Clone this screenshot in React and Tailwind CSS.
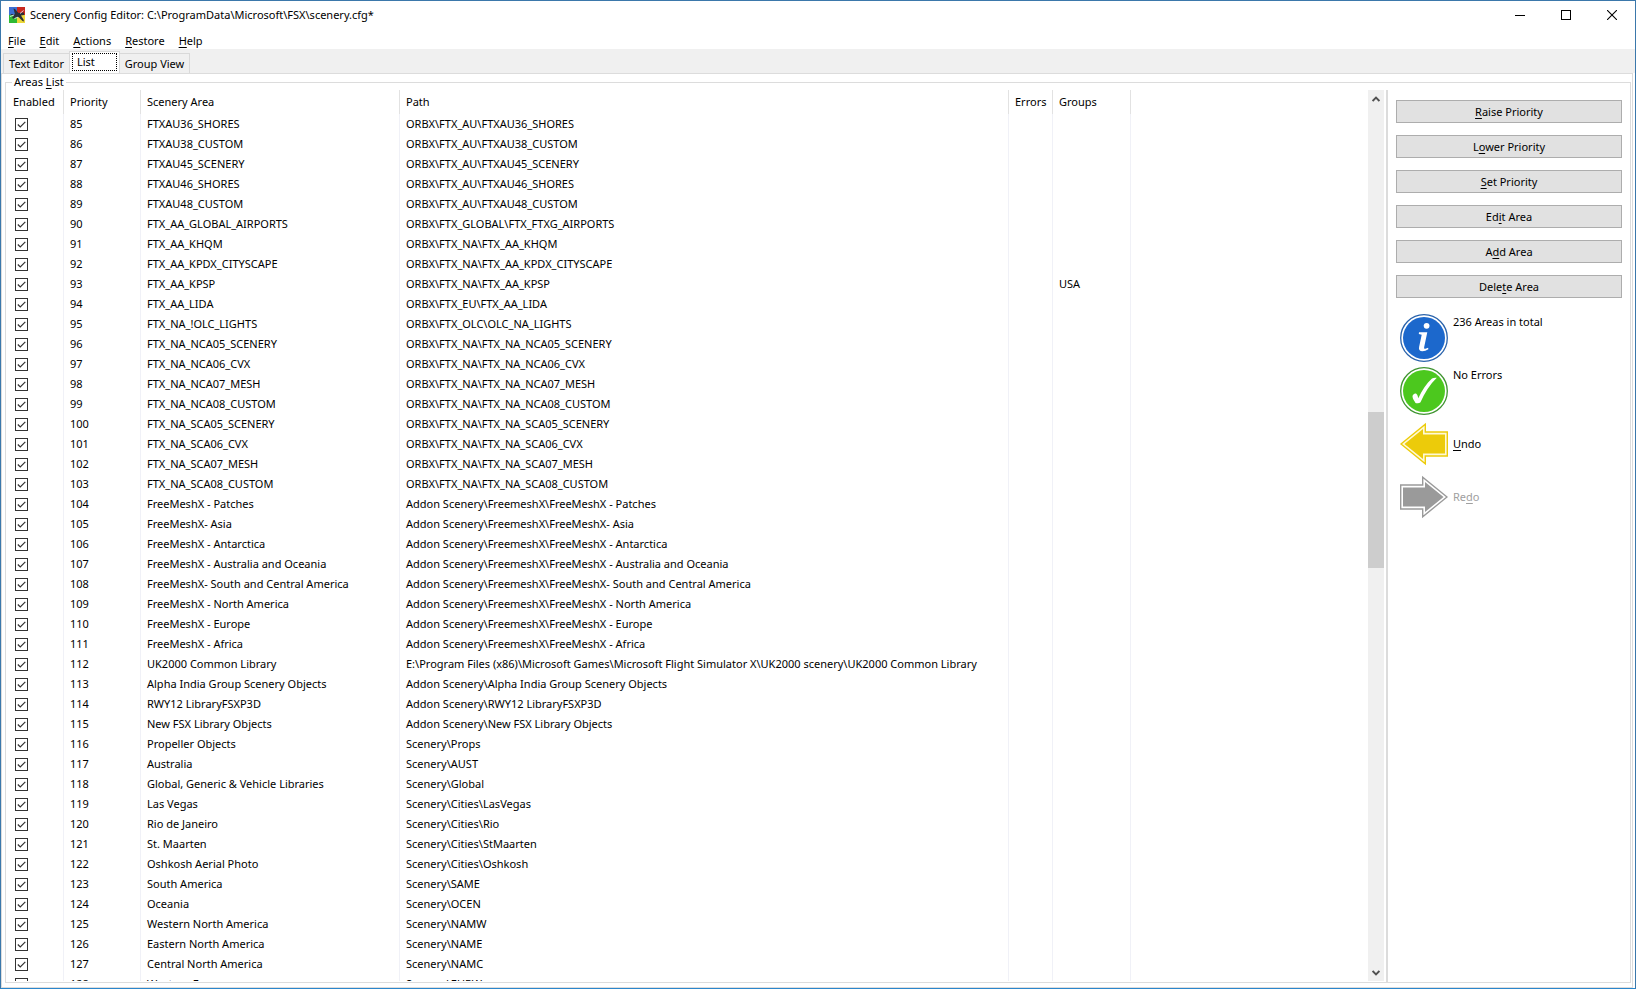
import React from "react";

const SCENERY = [
  ["FTXAU36_SHORES", "ORBX\\FTX_AU\\FTXAU36_SHORES"],
  ["FTXAU38_CUSTOM", "ORBX\\FTX_AU\\FTXAU38_CUSTOM"],
  ["FTXAU45_SCENERY", "ORBX\\FTX_AU\\FTXAU45_SCENERY"],
  ["FTXAU46_SHORES", "ORBX\\FTX_AU\\FTXAU46_SHORES"],
  ["FTXAU48_CUSTOM", "ORBX\\FTX_AU\\FTXAU48_CUSTOM"],
  ["FTX_AA_GLOBAL_AIRPORTS", "ORBX\\FTX_GLOBAL\\FTX_FTXG_AIRPORTS"],
  ["FTX_AA_KHQM", "ORBX\\FTX_NA\\FTX_AA_KHQM"],
  ["FTX_AA_KPDX_CITYSCAPE", "ORBX\\FTX_NA\\FTX_AA_KPDX_CITYSCAPE"],
  ["FTX_AA_KPSP", "ORBX\\FTX_NA\\FTX_AA_KPSP", "USA"],
  ["FTX_AA_LIDA", "ORBX\\FTX_EU\\FTX_AA_LIDA"],
  ["FTX_NA_!OLC_LIGHTS", "ORBX\\FTX_OLC\\OLC_NA_LIGHTS"],
  ["FTX_NA_NCA05_SCENERY", "ORBX\\FTX_NA\\FTX_NA_NCA05_SCENERY"],
  ["FTX_NA_NCA06_CVX", "ORBX\\FTX_NA\\FTX_NA_NCA06_CVX"],
  ["FTX_NA_NCA07_MESH", "ORBX\\FTX_NA\\FTX_NA_NCA07_MESH"],
  ["FTX_NA_NCA08_CUSTOM", "ORBX\\FTX_NA\\FTX_NA_NCA08_CUSTOM"],
  ["FTX_NA_SCA05_SCENERY", "ORBX\\FTX_NA\\FTX_NA_SCA05_SCENERY"],
  ["FTX_NA_SCA06_CVX", "ORBX\\FTX_NA\\FTX_NA_SCA06_CVX"],
  ["FTX_NA_SCA07_MESH", "ORBX\\FTX_NA\\FTX_NA_SCA07_MESH"],
  ["FTX_NA_SCA08_CUSTOM", "ORBX\\FTX_NA\\FTX_NA_SCA08_CUSTOM"],
  ["FreeMeshX - Patches", "Addon Scenery\\FreemeshX\\FreeMeshX - Patches"],
  ["FreeMeshX- Asia", "Addon Scenery\\FreemeshX\\FreeMeshX- Asia"],
  ["FreeMeshX - Antarctica", "Addon Scenery\\FreemeshX\\FreeMeshX - Antarctica"],
  ["FreeMeshX - Australia and Oceania", "Addon Scenery\\FreemeshX\\FreeMeshX - Australia and Oceania"],
  ["FreeMeshX- South and Central America", "Addon Scenery\\FreemeshX\\FreeMeshX- South and Central America"],
  ["FreeMeshX - North America", "Addon Scenery\\FreemeshX\\FreeMeshX - North America"],
  ["FreeMeshX - Europe", "Addon Scenery\\FreemeshX\\FreeMeshX - Europe"],
  ["FreeMeshX - Africa", "Addon Scenery\\FreemeshX\\FreeMeshX - Africa"],
  ["UK2000 Common Library", "E:\\Program Files (x86)\\Microsoft Games\\Microsoft Flight Simulator X\\UK2000 scenery\\UK2000 Common Library"],
  ["Alpha India Group Scenery Objects", "Addon Scenery\\Alpha India Group Scenery Objects"],
  ["RWY12 LibraryFSXP3D", "Addon Scenery\\RWY12 LibraryFSXP3D"],
  ["New FSX Library Objects", "Addon Scenery\\New FSX Library Objects"],
  ["Propeller Objects", "Scenery\\Props"],
  ["Australia", "Scenery\\AUST"],
  ["Global, Generic & Vehicle Libraries", "Scenery\\Global"],
  ["Las Vegas", "Scenery\\Cities\\LasVegas"],
  ["Rio de Janeiro", "Scenery\\Cities\\Rio"],
  ["St. Maarten", "Scenery\\Cities\\StMaarten"],
  ["Oshkosh Aerial Photo", "Scenery\\Cities\\Oshkosh"],
  ["South America", "Scenery\\SAME"],
  ["Oceania", "Scenery\\OCEN"],
  ["Western North America", "Scenery\\NAMW"],
  ["Eastern North America", "Scenery\\NAME"],
  ["Central North America", "Scenery\\NAMC"],
  ["Western Europe", "Scenery\\EURW"],
];
const AREAS = SCENERY.map(([name, path, group], i) => ({ priority: 85 + i, name, path, group }));

/* Text whose access key, marked with "&", is underlined. */
function Key({ text }) {
  const at = text.indexOf("&");
  return (
    <span className="whitespace-pre">
      {text.slice(0, at)}
      <span className="underline underline-offset-2">{text[at + 1]}</span>
      {text.slice(at + 2)}
    </span>
  );
}

function AppIcon() {
  return (
    <svg width="16" height="16" viewBox="0 0 16 16" aria-hidden="true">
      <rect width="8" height="8" fill="#3c6fd2" />
      <rect x="8" width="8" height="8" fill="#c8281e" />
      <rect y="8" width="8" height="8" fill="#2fb934" />
      <rect x="8" y="8" width="8" height="8" fill="#ecd83a" />
      <path d="M4.500 1.500 6 2l3.500 4L15 5.500V8l-3 .6 2.500 3.900.5 2-1.500-.5L9.500 10 7 10.500l-2 1.300-2-.8 2-2.500L1.500 8 2 7l4 .4z" fill="#2b3038" />
      <path d="M1 9.500 5 8M5.500 11.500 9 10.200M11 6.500l3.500-3" stroke="#dfe6ee" strokeWidth=".9" />
    </svg>
  );
}

function TitleBar() {
  return (
    <header className="flex h-[31px] shrink-0 items-start justify-between">
      <div className="flex h-7 items-center gap-[5px] pl-2">
        <AppIcon />
        <h1>Scenery Config Editor: C:\ProgramData\Microsoft\FSX\scenery.cfg*</h1>
      </div>
      <div className="flex h-7">
        <button aria-label="Minimize" className="flex w-[46px] items-center justify-center">
          <svg width="10" height="10" viewBox="0 0 10 10" shapeRendering="crispEdges"><path d="M0 5.500H10" stroke="#000" /></svg>
        </button>
        <button aria-label="Maximize" className="flex w-[46px] items-center justify-center">
          <svg width="10" height="10" viewBox="0 0 10 10" shapeRendering="crispEdges"><path d="M.5 .5h9v9h-9z" fill="none" stroke="#000" /></svg>
        </button>
        <button aria-label="Close" className="flex w-[46px] items-center justify-center">
          <svg width="10" height="10" viewBox="0 0 10 10"><path d="M0 0 10 10M10 0 0 10" stroke="#000" strokeWidth="1.100" /></svg>
        </button>
      </div>
    </header>
  );
}

function MenuBar() {
  return (
    <nav className="flex h-[17px] shrink-0 items-center gap-[14px] pl-[7px]">
      {["&File", "&Edit", "&Actions", "&Restore", "&Help"].map((t) => (
        <button key={t}><Key text={t} /></button>
      ))}
    </nav>
  );
}

function Tabs() {
  const side = "h-5 border-x border-t border-[#d9d9d9] bg-[#f0f0f0] text-center";
  return (
    <div role="tablist" className="flex h-6 shrink-0 items-end bg-[#f0f0f0] pl-0.5">
      <button role="tab" aria-selected="false" className={side + " w-[66px] border-r-0"}>Text Editor</button>
      <button role="tab" aria-selected="true" className="h-[22px] w-[51px] border-x border-t border-[#d9d9d9] bg-white px-0.5 pt-px pb-0.5">
        <span className="flex h-[18px] items-start border border-dotted border-black pl-1 leading-4">List</span>
      </button>
      <button role="tab" aria-selected="false" className={side + " w-[70px] border-l-0"}>Group View</button>
    </div>
  );
}

function Tick({ label }) {
  return (
    <span className="relative flex size-[13px]">
      <input type="checkbox" defaultChecked aria-label={label} className="peer size-[13px] appearance-none border border-[#333] bg-white" />
      <svg className="pointer-events-none absolute inset-0 hidden peer-checked:block" width="13" height="13" viewBox="0 0 13 13">
        <path d="M2.800 6.500 5.300 9 10.300 3.800" fill="none" stroke="#333" strokeWidth="1.200" />
      </svg>
    </span>
  );
}

function AreaTable() {
  const th = "border-r border-[#e2e2e2] pl-1.5 text-left font-normal";
  const td = "border-r border-[#f0f1f7] pl-1.5 whitespace-nowrap";
  return (
    <table className="w-full table-fixed border-separate border-spacing-0">
      <colgroup>
        <col className="w-[57px]" />
        <col className="w-[77px]" />
        <col className="w-[259px]" />
        <col className="w-[609px]" />
        <col className="w-11" />
        <col className="w-[78px]" />
        <col />
      </colgroup>
      <thead>
        <tr className="h-6">
          {["Enabled", "Priority", "Scenery Area", "Path", "Errors", "Groups"].map((h) => (
            <th key={h} scope="col" className={th}>{h}</th>
          ))}
          <td />
        </tr>
      </thead>
      <tbody>
        {AREAS.map((a) => (
          <tr key={a.priority} className="h-5">
            <td className="border-r border-[#f0f1f7] pl-2"><Tick label={"Enable " + a.name} /></td>
            <td className={td}>{a.priority}</td>
            <td className={td}>{a.name}</td>
            <td className={td}>{a.path}</td>
            <td className={td} />
            <td className={td}>{a.group}</td>
            <td />
          </tr>
        ))}
      </tbody>
    </table>
  );
}

function ScrollBar() {
  return (
    <div className="flex w-4 shrink-0 flex-col bg-[#f0f0f0]">
      <button aria-label="Scroll up" className="flex h-[17px] shrink-0 items-center justify-center">
        <svg width="8" height="6" viewBox="0 0 8 6"><path d="M.6 5 4 1.600 7.400 5" fill="none" stroke="#505050" strokeWidth="1.900" /></svg>
      </button>
      <div className="flex min-h-0 flex-1 flex-col">
        <div className="grow-[305]" />
        <div className="grow-[155] bg-[#cdcdcd]" />
        <div className="grow-[396]" />
      </div>
      <button aria-label="Scroll down" className="flex h-[17px] shrink-0 items-center justify-center">
        <svg width="8" height="6" viewBox="0 0 8 6"><path d="M.6 1 4 4.400 7.400 1" fill="none" stroke="#505050" strokeWidth="1.900" /></svg>
      </button>
    </div>
  );
}

function InfoIcon() {
  return (
    <svg width="48" height="48" viewBox="0 0 48 48" className="shrink-0" aria-hidden="true">
      <circle cx="24" cy="24" r="23.300" fill="#fff" stroke="#2a63ab" strokeWidth="1.300" />
      <circle cx="24" cy="24" r="21" fill="#1c68cc" />
      <circle cx="26.600" cy="11.800" r="2.900" fill="#fff" />
      <path d="M19 18.300h8.300L24.200 33c-.3 1.600.2 2 1.200 1.800.9-.2 1.800-.5 2.700-1l.3 1.400c-2 1.300-4 2-6 2-2.800 0-3.900-1.500-3.300-4.200l2.600-12.200-2.900-.8z" fill="#fff" />
    </svg>
  );
}

function OkIcon() {
  return (
    <svg width="48" height="48" viewBox="0 0 48 48" className="shrink-0" aria-hidden="true">
      <circle cx="24" cy="24" r="23.300" fill="#fff" stroke="#3f9430" strokeWidth="1.300" />
      <circle cx="24" cy="24" r="21" fill="#4cc81e" />
      <path d="M12.500 29.500c0-2 2.600-3.800 4-2.600 1 .9 1.400 2.500 1.800 4.300C22 23.500 26.500 16.500 32 11.500c1.500-.8 3-.9 4.800-.7C30 17.500 24.500 26 20.500 35.200c-1 1-3.500 1.500-5 .9-.8-1.800-3-4.500-3-6.600z" fill="#fff" />
    </svg>
  );
}

function ArrowIcon({ color, rim, flip }) {
  return (
    <svg width="48" height="48" viewBox="0 0 48 48" className="shrink-0" aria-hidden="true">
      <g transform={flip ? "translate(48 0) scale(-1 1)" : undefined}>
        <path d="M1 24 25.300 4.200V12H47.300V36H25.300V43.800Z" fill={rim} stroke={color} strokeWidth="1.400" />
        <path d="M4.500 24 23 9V14.500H45V33.500H23V39Z" fill={color} />
      </g>
    </svg>
  );
}

function SidePanel() {
  return (
    <aside className="flex w-[242px] shrink-0 flex-col px-2 pt-2.5">
      <div className="flex flex-col gap-3">
        {["&Raise Priority", "L&ower Priority", "&Set Priority", "Ed&it Area", "A&dd Area", "Dele&te Area"].map((t) => (
          <button key={t} className="h-[23px] border border-[#adadad] bg-[#e1e1e1]"><Key text={t} /></button>
        ))}
      </div>
      <div className="mt-4 flex flex-col gap-[5px] pl-1">
        <div className="flex gap-[5px]"><InfoIcon /><p>236 Areas in total</p></div>
        <div className="flex gap-[5px]"><OkIcon /><p>No Errors</p></div>
        <button className="flex items-center gap-[5px]"><ArrowIcon color="#eccb0a" rim="#fff9d6" /><Key text="&Undo" /></button>
        <button disabled className="flex items-center gap-[5px] text-[#a0a0a0]"><ArrowIcon color="#9a9a9a" rim="#fff" flip /><Key text="Re&do" /></button>
      </div>
    </aside>
  );
}

export default function App() {
  return (
    <div className="flex h-screen flex-col overflow-hidden border border-[#3b78ab] border-b-[#2a86cc] bg-white font-['Noto_Sans','Open_Sans',sans-serif] text-[11px] leading-4 text-black">
      <TitleBar />
      <MenuBar />
      <Tabs />
      <main className="mr-0.5 flex min-h-0 flex-1 flex-col border border-[#dcdcdc] pr-px pb-1 pl-[3px]">
        <fieldset className="flex min-h-0 min-w-0 flex-1 flex-col border border-[#dcdcdc]">
          <legend className="ml-1.5 px-0.5"><Key text="Areas &List" /></legend>
          <div className="flex min-h-0 flex-1">
            <div className="flex min-w-0 flex-1 pb-px pl-px">
              <div className="min-w-0 flex-1 overflow-hidden"><AreaTable /></div>
              <ScrollBar />
            </div>
            <div className="ml-0.5 w-0.5 bg-[#dcdcdc]" />
            <SidePanel />
          </div>
        </fieldset>
      </main>
    </div>
  );
}
